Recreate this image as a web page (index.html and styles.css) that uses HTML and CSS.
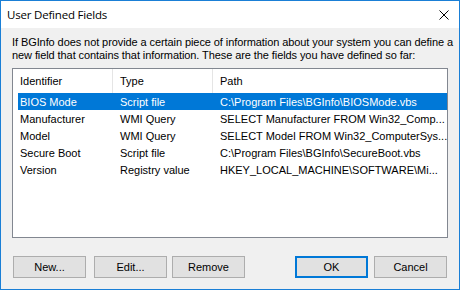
FILE: index.html
```html
<!DOCTYPE html>
<html>
<head>
<meta charset="utf-8">
<link rel="stylesheet" href="styles.css">
</head>
<body>
<div class="window">
  <div class="titlebar">
    <span class="title">User Defined Fields</span>
    <span class="close"><svg width="10" height="10" viewBox="0 0 10 10"><path d="M0.5 0.5 L9.5 9.5 M9.5 0.5 L0.5 9.5" stroke="#000" stroke-width="1" fill="none"/></svg></span>
  </div>
  <div class="client">
    <p class="intro">If BGInfo does not provide a certain piece of information about your system you can define a<br>new field that contains that information. These are the fields you have defined so far:</p>
    <div class="list">
      <div class="header">
        <div class="hcell c1">Identifier</div>
        <div class="hcell c2">Type</div>
        <div class="hcell c3">Path</div>
      </div>
      <div class="row selected">
        <div class="cell c1">BIOS Mode</div>
        <div class="cell c2">Script file</div>
        <div class="cell c3">C:\Program Files\BGInfo\BIOSMode.vbs</div>
      </div>
      <div class="row">
        <div class="cell c1">Manufacturer</div>
        <div class="cell c2">WMI Query</div>
        <div class="cell c3">SELECT Manufacturer FROM Win32_Comp...</div>
      </div>
      <div class="row">
        <div class="cell c1">Model</div>
        <div class="cell c2">WMI Query</div>
        <div class="cell c3">SELECT Model FROM Win32_ComputerSys...</div>
      </div>
      <div class="row">
        <div class="cell c1">Secure Boot</div>
        <div class="cell c2">Script file</div>
        <div class="cell c3">C:\Program Files\BGInfo\SecureBoot.vbs</div>
      </div>
      <div class="row">
        <div class="cell c1">Version</div>
        <div class="cell c2">Registry value</div>
        <div class="cell c3">HKEY_LOCAL_MACHINE\SOFTWARE\Mi...</div>
      </div>
    </div>
    <div class="buttons">
      <button class="btn b-new">New...</button>
      <button class="btn b-edit">Edit...</button>
      <button class="btn b-remove">Remove</button>
      <button class="btn b-ok default">OK</button>
      <button class="btn b-cancel">Cancel</button>
    </div>
  </div>
</div>
</body>
</html>
```
FILE: styles.css
```css
html, body {
  margin: 0;
  padding: 0;
  background: #ffffff;
}
.window {
  width: 460px;
  height: 290px;
  box-sizing: border-box;
  border: 1px solid #1a7fd6;
  display: flex;
  flex-direction: column;
  font-family: "Liberation Sans", Arial, sans-serif;
  font-size: 11px;
  color: #000;
}
.titlebar {
  height: 27px;
  background: #ffffff;
  display: flex;
  align-items: center;
  padding-left: 6px;
  flex: none;
}
.title {
  font-family: "Open Sans", "Noto Sans", sans-serif;
  font-size: 11.5px;
  letter-spacing: -0.2px;
  flex: 1;
  padding-bottom: 1px;
}
.close {
  width: 10px;
  height: 10px;
  margin-right: 10px;
  display: flex;
}
.client {
  flex: 1;
  background: #f0f0f0;
  padding: 8px 0 0 11px;
}
.intro {
  margin: 0;
  line-height: 13px;
  white-space: nowrap;
  letter-spacing: -0.085px;
}
.list {
  margin-top: 6px;
  width: 436px;
  height: 170px;
  box-sizing: border-box;
  border: 1px solid #828790;
  background: #ffffff;
}
.header {
  display: flex;
  height: 24px;
}
.hcell {
  box-sizing: border-box;
  display: flex;
  align-items: center;
  padding-left: 7px;
  border-right: 1px solid #e5e5e5;
}
.hcell.c1 { width: 100px; }
.hcell.c2 { width: 100px; }
.hcell.c3 { flex: 1; border-right: none; }
.row {
  display: flex;
  height: 17px;
  margin-left: 5px;
  align-items: center;
  white-space: nowrap;
}
.row.selected {
  background: #0078d7;
  color: #ffffff;
}
.cell {
  box-sizing: border-box;
  overflow: hidden;
}
.cell.c1 { width: 95px; padding-left: 2px; }
.cell.c2 { width: 100px; padding-left: 7px; }
.cell.c3 { flex: 1; padding-left: 7px; }
.buttons {
  display: flex;
  margin-top: 18px;
  margin-left: 1px;
}
.btn {
  width: 73px;
  height: 22px;
  box-sizing: border-box;
  background: #e1e1e1;
  border: 1px solid #adadad;
  font-family: "Liberation Sans", Arial, sans-serif;
  font-size: 11px;
  color: #000;
  padding: 0;
  margin: 0;
}
.btn.default {
  border: 2px solid #0078d7;
}
.b-edit { margin-left: 8px; }
.b-remove { margin-left: 5px; }
.b-ok { margin-left: 50px; }
.b-cancel { margin-left: 6px; }
```
